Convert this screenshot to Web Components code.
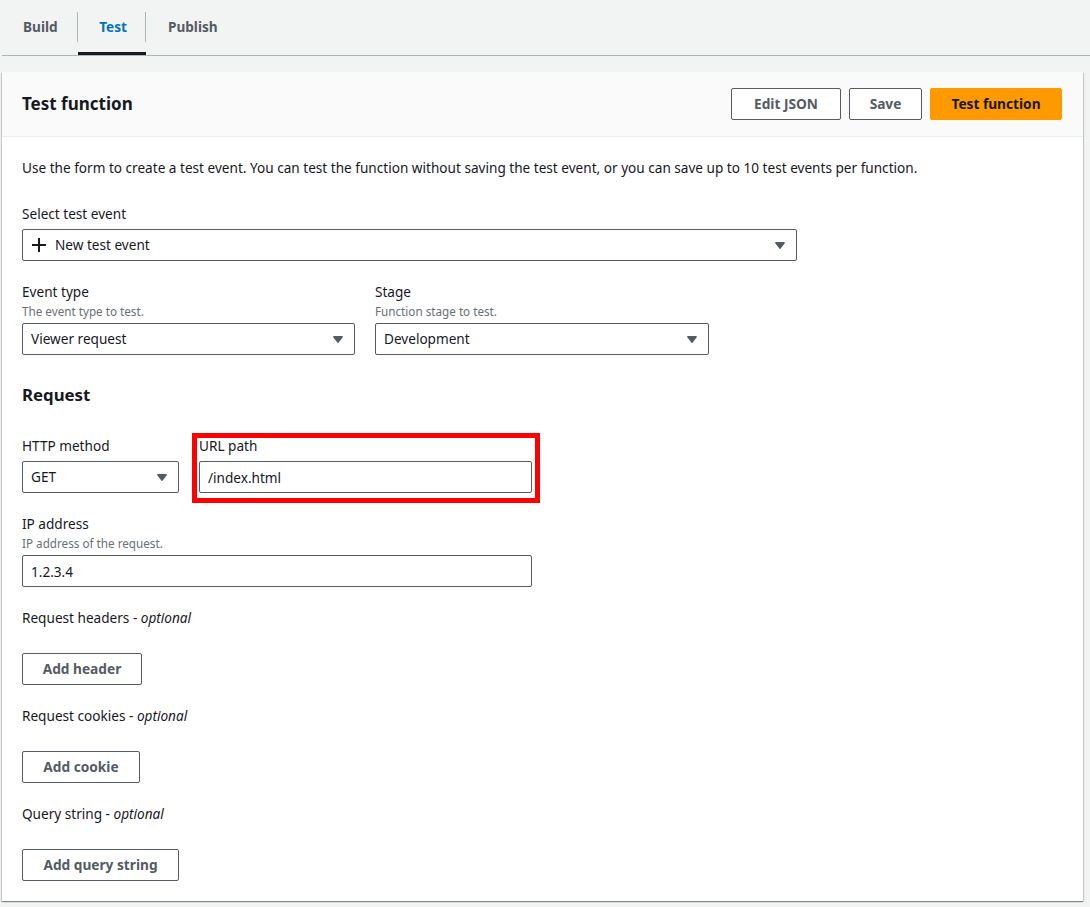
<!DOCTYPE html>
<html lang="en">
<head>
<meta charset="utf-8">
<title>Test function</title>
<style>
html,body{margin:0;padding:0;background:#f2f3f3;}
body{width:1090px;height:907px;overflow:hidden;font-family:"Noto Sans","Open Sans",sans-serif;font-size:13.6px;color:#16191f;}
</style>
</head>
<body>
<x-tabs>
  <x-tab>Build</x-tab>
  <x-tab active>Test</x-tab>
  <x-tab>Publish</x-tab>
</x-tabs>
<x-card>
  <span slot="title">Test function</span>
  <x-btn slot="actions" style="width:110px">Edit JSON</x-btn>
  <x-btn slot="actions" style="width:73px">Save</x-btn>
  <x-btn slot="actions" primary style="width:132px">Test function</x-btn>

  <x-text>Use the form to create a test event. You can test the function without saving the test event, or you can save up to 10 test events per function.</x-text>
  <x-field label="Select test event" style="width:775px">
    <x-select plus>New test event</x-select>
  </x-field>
  <x-row gap="20">
    <x-field label="Event type" desc="The event type to test." style="width:333px"><x-select>Viewer request</x-select></x-field>
    <x-field label="Stage" desc="Function stage to test." style="width:334px"><x-select>Development</x-select></x-field>
  </x-row>
  <x-heading>Request</x-heading>
  <x-row gap="20">
    <x-field label="HTTP method" style="width:157px"><x-select>GET</x-select></x-field>
    <x-field label="URL path" style="width:333px" highlight><x-input>/index.html</x-input></x-field>
  </x-row>
  <x-field label="IP address" desc="IP address of the request." style="width:510px"><x-input>1.2.3.4</x-input></x-field>
  <x-field label="Request headers" optional spaced><x-btn style="width:120px">Add header</x-btn></x-field>
  <x-field label="Request cookies" optional spaced><x-btn style="width:118px">Add cookie</x-btn></x-field>
  <x-field label="Query string" optional spaced><x-btn style="width:157px">Add query string</x-btn></x-field>
</x-card>
<script>
function def(name, css, html){
  customElements.define(name, class extends HTMLElement{
    constructor(){
      super();
      const r=this.attachShadow({mode:"open"});
      r.innerHTML='<style>'+css+'</style>'+(typeof html==="function"?html(this):html);
    }
  });
}
def("x-tabs",
 ":host{display:flex;box-sizing:border-box;height:56px;margin:0 0 16px 2px;border-bottom:1px solid #aab7b8;}",
 "<slot></slot>");
def("x-tab",
 `:host{display:block;position:relative;box-sizing:border-box;height:55px;padding:0 21px 0 22px;font-weight:700;font-size:13.6px;line-height:54px;color:#545b64;}
  :host(:first-child){padding:0 21px 0 21px;width:76px;}
  :host([active]){width:68px;padding:0 0 0 2px;text-align:center;color:#0073bb;border-bottom:3px solid #16191f;line-height:54px;}
  :host([active])::before,:host([active])::after{content:"";position:absolute;top:12px;height:30px;width:1px;background:#aab7b8;}
  :host([active])::before{left:-1px;}
  :host([active])::after{right:0;}`,
 "<slot></slot>");
def("x-card",
 `:host{display:block;box-sizing:border-box;width:1081px;height:829px;margin-left:2px;background:#fff;box-shadow:0 1px 1px 0 rgba(0,28,36,.3),1px 1px 1px 0 rgba(0,28,36,.15),-1px 1px 1px 0 rgba(0,28,36,.15);}
  header{box-sizing:border-box;height:65px;padding:0 21px 0 20px;display:flex;align-items:center;justify-content:space-between;background:#fafafa;border-bottom:1px solid #eaeded;}
  h2{margin:0;font-size:17px;line-height:22px;font-weight:700;color:#16191f;}
  .actions{display:flex;gap:8px;}
  .body{display:flex;flex-direction:column;gap:21px;padding:21px 20px 0;}`,
 `<header><h2><slot name="title"></slot></h2><div class="actions"><slot name="actions"></slot></div></header><div class="body"><slot></slot></div>`);
def("x-btn",
 `:host{display:block;flex:none;}
  button{display:block;box-sizing:border-box;width:100%;height:32px;padding:0;background:#fff;border:1px solid #545b64;border-radius:2px;font:700 13.7px/20px "Noto Sans","Open Sans",sans-serif;color:#545b64;text-align:center;}
  :host([primary]) button{background:#ff9900;border-color:#ff9900;color:#16191f;}`,
 "<button><slot></slot></button>");
def("x-text",":host{display:block;line-height:20px;color:#16191f;font-size:13.6px;margin-bottom:5px;}","<slot></slot>");
def("x-heading",":host{display:block;font-size:16.8px;font-weight:700;line-height:22px;margin:8px 0 9px;color:#16191f;}","<slot></slot>");
def("x-row",":host{display:flex;gap:20px;}","<slot></slot>");
def("x-field",
 `:host{display:block;position:relative;flex:none;}
  .l{line-height:20px;font-size:13.6px;color:#16191f;}
  .l i{font-style:italic;}
  .d{font-size:11.7px;line-height:16px;color:#687078;margin-top:1px;}
  .c{margin-top:5px;}
  :host([spaced]) .c{margin-top:25px;}
  .hl{position:absolute;left:-7px;top:-3px;width:348px;height:70px;box-sizing:border-box;border:5px solid #ff0000;pointer-events:none;}
  .d + .c{margin-top:4px;}`,
 el=>{
  const opt=el.hasAttribute("optional")?' - <i>optional</i>':'';
  const d=el.getAttribute("desc");
  return `<div class="l">${el.getAttribute("label")}${opt}</div>`+(d?`<div class="d">${d}</div>`:'')+`<div class="c"><slot></slot></div>`+(el.hasAttribute("highlight")?'<div class="hl"></div>':'');
 });
def("x-select",
 `:host{display:flex;align-items:center;box-sizing:border-box;height:32px;padding:0 8px;background:#fff;border:1px solid #545b64;border-radius:2px;line-height:20px;color:#16191f;}
  svg.p{flex:none;width:16px;height:16px;margin-right:8px;}
  .t{flex:1;white-space:nowrap;}
  svg.a{flex:none;width:10px;height:7px;margin-right:3px;}`,
 el=>(el.hasAttribute("plus")?'<svg class="p" viewBox="0 0 16 16"><path d="M8 1v14M1 8h14" stroke="#16191f" stroke-width="2" fill="none"/></svg>':'')+
  '<span class="t"><slot></slot></span><svg class="a" viewBox="0 0 10 7"><path d="M.8 0h8.4a.7.7 0 0 1 .55 1.15L5.5 6.7a.65.65 0 0 1-1 0L.25 1.15A.7.7 0 0 1 .8 0z" fill="#545b64"/></svg>');
def("x-input",
 `:host{display:flex;align-items:center;box-sizing:border-box;height:32px;padding:1px 8px 0;background:#fff;border:1px solid #545b64;border-radius:2px;line-height:20px;color:#16191f;white-space:nowrap;}`,
 "<slot></slot>");
</script>
</body>
</html>
